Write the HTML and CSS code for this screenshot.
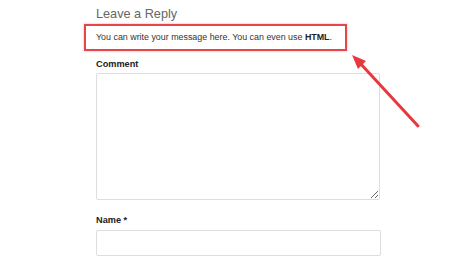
FILE: index.html
```html
<!DOCTYPE html>
<html lang="en">
<head>
    <meta charset="UTF-8">
    <title>Leave a Reply</title>
    <link rel="stylesheet" href="styles.css">
</head>
<body>
    <div class="respond">
        <h3 class="reply-title">Leave a Reply</h3>

        <p class="comment-notes">You can write your message here. You can even use <strong>HTML</strong>.</p>

        <div class="field">
            <label for="comment">Comment</label>
            <textarea id="comment" class="comment-box"></textarea>
        </div>

        <div class="field">
            <label for="author">Name *</label>
            <input type="text" id="author" class="name-box">
        </div>
    </div>

    <!-- annotation arrow pointing at the notes box -->
    <svg class="arrow" width="474" height="262" viewBox="0 0 474 262">
        <line x1="418" y1="126" x2="359" y2="62" stroke="#e8383d" stroke-width="3" stroke-linecap="round"/>
        <polygon points="352,55 366,61 358,69" fill="#e8383d"/>
    </svg>
</body>
</html>
```

FILE: styles.css
```css
body {
    margin: 0;
    background: #ffffff;
    font-family: 'Liberation Sans', Arial, sans-serif;
    color: #333333;
    position: relative;
    width: 474px;
    height: 262px;
    overflow: hidden;
}

.respond {
    width: 284px;
    padding-left: 96px;
}

.reply-title {
    margin: 6px 0 0;
    font-size: 12.7px;
    font-weight: normal;
    color: #666666;
    line-height: 17px;
}

.comment-notes {
    margin: 1px 0 0 -12px;
    width: 249px;
    height: 23px;
    padding-left: 10px;
    border: 2px solid #e5454b;
    box-shadow: 0 0 2px rgba(229, 69, 75, 0.5);
    font-size: 8.9px;
    line-height: 23px;
    white-space: nowrap;
    color: #333333;
}

.comment-notes strong {
    color: #222222;
}

.field {
    display: flex;
    flex-direction: column;
}

.field label {
    font-size: 9.2px;
    font-weight: bold;
    color: #222222;
    line-height: 12px;
    margin-top: 7px;
    margin-bottom: 3px;
}

.field + .field label {
    margin-top: 14px;
    margin-bottom: 4px;
}

.comment-box {
    box-sizing: border-box;
    width: 284px;
    height: 127px;
    margin: 0;
    border: 1px solid #dddddd;
    border-radius: 2px;
    background: #ffffff;
}

.name-box {
    box-sizing: border-box;
    width: 285px;
    height: 26px;
    margin: 0;
    border: 1px solid #dddddd;
    border-radius: 2px;
    background: #ffffff;
}

.arrow {
    position: absolute;
    left: 0;
    top: 0;
    pointer-events: none;
}
```
